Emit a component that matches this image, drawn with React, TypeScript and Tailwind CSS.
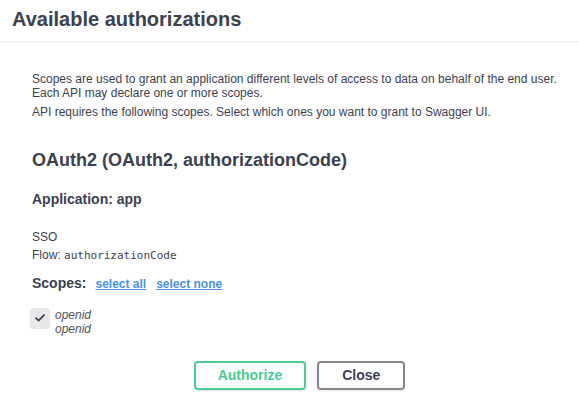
import React from 'react';

const App: React.FC = () => {
  return (
    <div className="w-[579px] h-[404px] bg-white font-['Liberation_Sans',Arial,sans-serif] text-[#3b4151]">
      <div className="h-[43px] border-b-2 border-[#f2f2f2] px-3 pt-2">
        <h3 className="text-[20px] leading-[23px] font-bold">Available authorizations</h3>
      </div>
      <div className="pl-8 pr-3 pt-[29px]">
        <p className="text-[12px] leading-[14px]">
          Scopes are used to grant an application different levels of access to data on behalf of the end user.
          <br />
          Each API may declare one or more scopes.
        </p>
        <p className="text-[12px] leading-[14px] mt-[5px]">
          API requires the following scopes. Select which ones you want to grant to Swagger UI.
        </p>
        <h4 className="text-[18px] leading-[22px] font-bold mt-[30px]">OAuth2 (OAuth2, authorizationCode)</h4>
        <h6 className="text-[14px] leading-[17px] font-bold mt-[20px]">Application: app</h6>
        <p className="text-[12px] leading-[14px] mt-[22px]">SSO</p>
        <p className="text-[12px] leading-[14px] mt-1">
          Flow: <code className="font-['DejaVu_Sans_Mono',monospace] text-[11px]">authorizationCode</code>
        </p>
        <div className="flex items-baseline mt-[12px]">
          <h2 className="text-[14px] leading-[17px] font-bold">Scopes:</h2>
          <a className="ml-[9px] text-[12px] font-bold text-[#4990e2] underline cursor-pointer">select all</a>
          <a className="ml-[10px] text-[12px] font-bold text-[#4990e2] underline cursor-pointer">select none</a>
        </div>
        <div className="flex items-start mt-[16px] -ml-[2px]">
          <div className="w-5 h-5 -mt-[1px] rounded-[4px] bg-[#e8e8e8] shadow-[0_1px_1px_rgba(0,0,0,0.1)] flex items-center justify-center">
            <svg width="10" height="8" viewBox="0 0 10 8" fill="none">
              <path d="M1 4.2L3.6 6.6L9 1.2" stroke="#3b4151" strokeWidth="1.8" strokeLinecap="round" strokeLinejoin="round" />
            </svg>
          </div>
          <div className="ml-[5px] -mt-[1px] text-[12px] leading-[14px] italic text-[#50545e]">
            <div>openid</div>
            <div>openid</div>
          </div>
        </div>
        <div className="flex justify-center gap-[11px] mt-[25px]">
          <button className="h-[29px] px-[22px] border-2 border-[#49cc90] rounded-[4px] text-[14px] font-bold text-[#49cc90] bg-transparent shadow-[0_1px_2px_rgba(0,0,0,0.1)]">
            Authorize
          </button>
          <button className="h-[29px] px-[23px] border-2 border-[#888888] rounded-[4px] text-[14px] font-bold text-[#3b4151] bg-transparent shadow-[0_1px_2px_rgba(0,0,0,0.1)]">
            Close
          </button>
        </div>
      </div>
    </div>
  );
};

export default App;
